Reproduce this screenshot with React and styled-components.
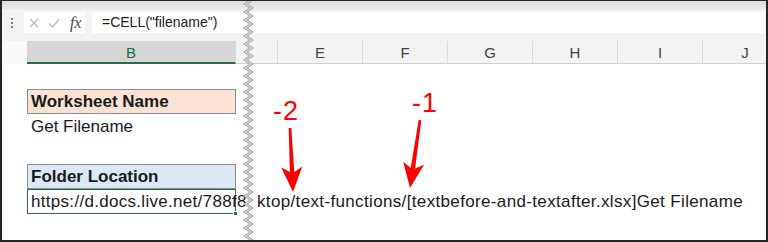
import React from "react";
import styled, { createGlobalStyle } from "styled-components";

const GlobalStyle = createGlobalStyle`
  html, body { margin: 0; padding: 0; background: #ffffff; }
  body { font-family: "Liberation Sans", Arial, sans-serif; }
`;

const Frame = styled.div`
  position: relative;
  width: 768px;
  height: 242px;
  box-sizing: border-box;
  border: 2px solid #262626;
  border-top-width: 1px;
  overflow: hidden;
  display: flex;
  flex-direction: column;
  background: #ffffff;
`;

const FormulaBar = styled.div`
  flex: 0 0 40px;
  box-sizing: border-box;
  display: flex;
  align-items: flex-start;
  padding: 11px 1px 0 8px;
  background: linear-gradient(#dedede 0, #e9e9e9 8px, #f3f3f3 9px, #f3f3f3 100%);
`;

const Grip = styled.div`
  width: 4px;
  height: 21px;
  display: flex;
  flex-direction: column;
  justify-content: center;
  align-items: center;
  gap: 2px;
  margin-right: 10px;
  & > span {
    width: 2px;
    height: 2px;
    border-radius: 1px;
    background: #555;
  }
`;

const NameControls = styled.div`
  width: 61px;
  height: 21px;
  background: #ffffff;
  display: flex;
  align-items: center;
  box-sizing: border-box;
  padding-left: 5px;
  gap: 9px;
`;

const FxLabel = styled.span`
  font-family: "Liberation Serif", "Times New Roman", serif;
  font-style: italic;
  font-size: 16px;
  color: #444;
  margin-left: 1px;
  letter-spacing: -0.3px;
`;

const FormulaInput = styled.div`
  flex: 1;
  height: 21px;
  margin-left: 7px;
  background: #ffffff;
  padding-left: 10px;
  font-size: 14px;
  line-height: 21px;
  color: #222;
`;

const Sheet = styled.div`
  flex: 1;
  display: flex;
`;

const Pane = styled.div`
  overflow: hidden;
  display: grid;
  grid-template-columns: ${(p) => p.$cols};
  grid-template-rows: 23px repeat(7, 25px);
  flex: ${(p) => p.$flex};
`;

const ColHeader = styled.div`
  grid-row: 1;
  box-sizing: border-box;
  display: flex;
  align-items: center;
  justify-content: center;
  font-size: 15px;
  color: ${(p) => (p.$selected ? "#1d6b40" : "#444")};
  background: ${(p) => (p.$blank ? "#fafafa" : p.$selected ? "#d6d6d6" : "#f3f3f3")};
  border-bottom: ${(p) => (p.$blank ? "none" : p.$selected ? "2px solid #217346" : "1px solid #cfcfcf")};
  border-right: ${(p) => (p.$blank ? "none" : "1px solid #dadada")};
  padding-top: 1px;
`;

const Cell = styled.div`
  grid-row: ${(p) => p.$row};
  grid-column: ${(p) => p.$col};
  position: relative;
  box-sizing: border-box;
  display: flex;
  align-items: center;
  white-space: nowrap;
  font-size: 17px;
  color: #1a1a1a;
  padding-left: ${(p) => p.$pad ?? 4}px;
  padding-top: 1px;
  font-weight: ${(p) => (p.$bold ? 700 : 400)};
  background: ${(p) => p.$fill || "transparent"};
  border: ${(p) => (p.$border ? `1px solid ${p.$border}` : "none")};
  letter-spacing: ${(p) => p.$spacing || "normal"};
`;

const Handle = styled.span`
  position: absolute;
  right: -3px;
  bottom: -3px;
  width: 5px;
  height: 5px;
  background: #217346;
  border: 1px solid #ffffff;
  box-sizing: border-box;
`;

const Overlay = styled.svg`
  position: absolute;
  left: -2px;
  top: -1px;
  pointer-events: none;
`;

const Label = styled.span`
  position: absolute;
  font-family: "Liberation Sans", Arial, sans-serif;
  font-size: 27px;
  line-height: 27px;
  color: #fe0000;
  letter-spacing: 1px;
`;

function arrowPath(x1, y1, x2, y2) {
  const dx = x2 - x1;
  const dy = y2 - y1;
  const L = Math.hypot(dx, dy);
  const ux = dx / L;
  const uy = dy / L;
  const px = -uy;
  const py = ux;
  const hl = 25;
  const hw = 10.5;
  const w1 = 1.3;
  const w2 = 2.2;
  const notch = 5;
  const bx = x2 - ux * hl;
  const by = y2 - uy * hl;
  const pts = [
    [x1 + px * w1, y1 + py * w1],
    [bx + ux * notch + px * w2, by + uy * notch + py * w2],
    [bx + px * hw, by + py * hw],
    [x2, y2],
    [bx - px * hw, by - py * hw],
    [bx + ux * notch - px * w2, by + uy * notch - py * w2],
    [x1 - px * w1, y1 - py * w1],
  ];
  return "M" + pts.map((p) => p[0].toFixed(1) + " " + p[1].toFixed(1)).join(" L") + " Z";
}

function zigzag() {
  const left = [];
  const right = [];
  for (let i = 0, y = -4; y <= 250; i++, y += 4) {
    const x = i % 2 ? 8 : 2;
    left.push([x, y]);
    right.push([x + 3, y]);
  }
  const poly = [...left, ...right.slice().reverse()];
  const s = (arr) => arr.map((p) => p.join(",")).join(" ");
  return { band: s(poly), left: s(left), right: s(right) };
}

const Break = styled.svg`
  position: absolute;
  left: 240px;
  top: -1px;
`;

const rightHeaders = ["E", "F", "G", "H", "I", "J"];

export default function App() {
  const z = zigzag();
  return (
    <>
      <GlobalStyle />
      <Frame>
        <FormulaBar>
          <Grip>
            <span />
            <span />
            <span />
          </Grip>
          <NameControls>
            <svg width="10" height="10" viewBox="0 0 10 10">
              <path d="M1 1 L9 9 M9 1 L1 9" stroke="#b8b8b8" strokeWidth="1.2" fill="none" />
            </svg>
            <svg width="12" height="10" viewBox="0 0 12 10">
              <path d="M1 5.5 L4.5 9 L11 1.5" stroke="#b8b8b8" strokeWidth="1.2" fill="none" />
            </svg>
            <FxLabel>fx</FxLabel>
          </NameControls>
          <FormulaInput>=CELL("filename")</FormulaInput>
        </FormulaBar>
        <Sheet>
          <Pane $cols="25px 209px 1fr" $flex="0 0 245px">
            <ColHeader $blank />
            <ColHeader $selected>B</ColHeader>
            <ColHeader />
            <Cell $row={3} $col={2} $fill="#fbe2d5" $border="#8c8c8c" $bold $pad={3}>
              Worksheet Name
            </Cell>
            <Cell $row={4} $col={2}>Get Filename</Cell>
            <Cell $row={6} $col={2} $fill="#dbe9f7" $border="#8c8c8c" $bold $pad={3}>
              Folder Location
            </Cell>
            <Cell $row={7} $col={2} $border="#217346" $pad={3} $spacing="0.3px">
              https://d.docs.live.net/788f8
              <Handle />
            </Cell>
          </Pane>
          <Pane $cols="31px repeat(6, 85px)" $flex="1">
            <ColHeader />
            {rightHeaders.map((h) => (
              <ColHeader key={h}>{h}</ColHeader>
            ))}
            <Cell $row={7} $col="1 / -1" $pad={10} $spacing="0.35px">
              ktop/text-functions/[textbefore-and-textafter.xlsx]Get Filename
            </Cell>
          </Pane>
        </Sheet>

        <Break width="14" height="244" viewBox="0 0 14 244">
          <polygon points={z.band} fill="#ffffff" />
          <polyline points={z.left} fill="none" stroke="#a8a8a8" strokeWidth="1.1" />
          <polyline points={z.right} fill="none" stroke="#a8a8a8" strokeWidth="1.1" />
        </Break>

        <Overlay width="768" height="242" viewBox="0 0 768 242">
          <path d={arrowPath(290, 128, 293, 192)} fill="#fe0000" />
          <path d={arrowPath(420, 120, 410, 188)} fill="#fe0000" />
        </Overlay>
        <Label style={{ left: 271, top: 97 }}>-2</Label>
        <Label style={{ left: 410, top: 89 }}>-1</Label>
      </Frame>
    </>
  );
}
